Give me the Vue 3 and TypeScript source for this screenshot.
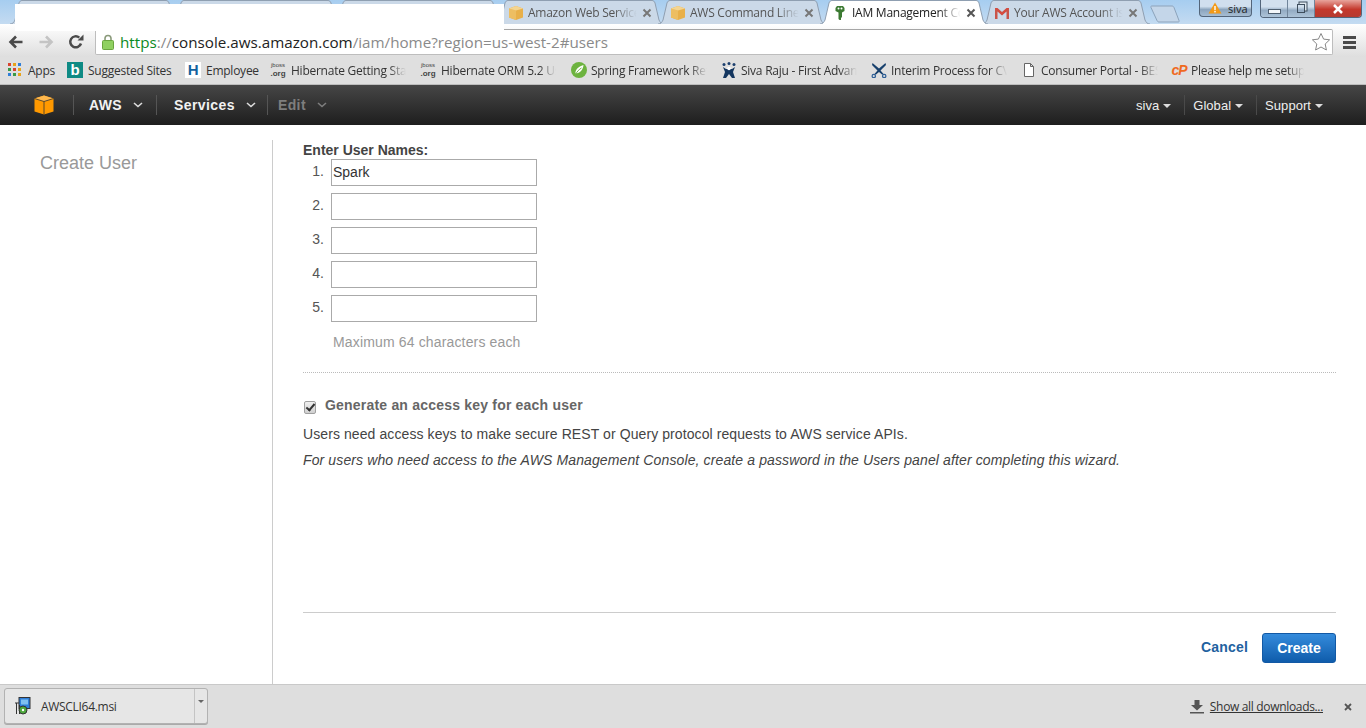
<script setup lang="ts">
interface Tab { title: string; icon: string; active?: boolean }
interface Bookmark { label: string; icon: string; width: number; gap: number; fade?: boolean }
interface NavItem { label: string; dim?: boolean }

const tabs: Tab[] = [
  { title: '', icon: '' },
  { title: '', icon: '' },
  { title: '', icon: '' },
  { title: 'Amazon Web Services', icon: 'cube' },
  { title: 'AWS Command Line Interface', icon: 'cube' },
  { title: 'IAM Management Console', icon: 'key', active: true },
  { title: 'Your AWS Account is ready', icon: 'gmail' }
]

const bookmarks: Bookmark[] = [
  { label: 'Apps', icon: 'apps', width: 28, gap: 11 },
  { label: 'Suggested Sites', icon: 'bing', width: 85, gap: 12 },
  { label: 'Employee', icon: 'h', width: 53, gap: 11 },
  { label: 'Hibernate Getting Started', icon: 'jboss', width: 115, gap: 14, fade: true },
  { label: 'Hibernate ORM 5.2 User Guide', icon: 'jboss', width: 115, gap: 15, fade: true },
  { label: 'Spring Framework Reference', icon: 'spring', width: 116, gap: 14, fade: true },
  { label: 'Siva Raju - First Advantage', icon: 'atl', width: 116, gap: 14, fade: true },
  { label: 'Interim Process for CVS', icon: 'cross', width: 116, gap: 14, fade: true },
  { label: 'Consumer Portal - BESS', icon: 'doc', width: 117, gap: 13, fade: true },
  { label: 'Please help me setup a new', icon: 'cp', width: 113, gap: 0, fade: true }
]

const leftNav: NavItem[] = [
  { label: 'AWS' },
  { label: 'Services' },
  { label: 'Edit', dim: true }
]

const rightNav = ['siva', 'Global', 'Support']
const names = ['Spark', '', '', '', '']
</script>

<template>
  <div class="screen">
    <div class="strip">
      <div v-for="(tab, i) in tabs" :key="i" class="tab" :class="{ active: tab.active }">
        <svg class="tab-shape" viewBox="0 0 168 24" preserveAspectRatio="none">
          <path d="M0 24C3 24 4 22 5 20L9 3C9.500 1.500 10.500 .5 12 .5H156C157.500 .5 158.500 1.500 159 3L163 20C164 22 165 24 168 24" />
        </svg>
        <template v-if="tab.title">
          <svg v-if="tab.icon === 'cube'" class="tab-icon" viewBox="0 0 16 16">
            <path d="M8 1l7 2.500v9L8 15 1 12.500v-9z" fill="#e8b04a" />
            <path d="M8 5.500V15L1 12.500v-9z" fill="#edbe62" />
            <path d="M8 1l7 2.500L8 5.500 1 3.500z" fill="#f4d591" />
          </svg>
          <svg v-else-if="tab.icon === 'key'" class="tab-icon" viewBox="0 0 16 16">
            <path d="M5 1h6l1.500 2v3L10 7.500V12l-1 1v2H7.500L6.500 14V7.500L3.500 6V3z" fill="#3c7a32" />
            <circle cx="6.500" cy="3.500" r="1" fill="#fff" />
            <circle cx="9.500" cy="3.500" r="1" fill="#fff" />
          </svg>
          <svg v-else class="tab-icon" viewBox="0 0 16 16">
            <path d="M1 3h2.500L8 7l4.500-4H15v11h-2.500V6.500L8 10.500 3.500 6.500V14H1z" fill="#c9544a" />
            <path d="M1 3h1.500L8 8l5.500-5H15L8 10z" fill="#d84a3e" />
          </svg>
          <span class="tab-title">{{ tab.title }}</span>
          <svg class="tab-close" viewBox="0 0 10 10">
            <path d="M1.500 1.500l7 7M8.500 1.500l-7 7" />
          </svg>
        </template>
      </div>
      <div class="new-tab">
        <svg viewBox="0 0 32 18"><path d="M2 1h20c1 0 1.500.5 2 1.500l5 13c.5 1 0 1.500-1 1.500H9c-1 0-1.500-.5-2-1.500l-6-13C.5 1.500 1 1 2 1z" /></svg>
      </div>
      <div class="window-ctrls">
        <div class="user-badge">
          <svg viewBox="0 0 14 12" class="warn"><path d="M7 .5l6.500 11H.5z" fill="#f39a16" /><rect x="6.300" y="4" width="1.400" height="4.200" fill="#fff" /><rect x="6.300" y="9" width="1.400" height="1.400" fill="#fff" /></svg>
          <span>siva</span>
        </div>
        <div class="win-btns">
          <div class="win-btn"><span class="min-bar"></span></div>
          <div class="win-btn"><span class="restore"></span></div>
          <div class="win-btn close">
            <svg viewBox="0 0 12 10"><path d="M2 1l8 8M10 1L2 9" /></svg>
          </div>
        </div>
      </div>
    </div>

    <div class="redaction"></div>

    <div class="toolbar">
      <svg class="tool" viewBox="0 0 16 16"><path d="M14.500 8H3M8 2.500L2.500 8 8 13.500" fill="none" stroke="#4a4a4a" stroke-width="2.600" /></svg>
      <svg class="tool fwd" viewBox="0 0 16 16"><path d="M1.500 8H13M8 2.500L13.500 8 8 13.500" fill="none" stroke="#c4c4c4" stroke-width="2.600" /></svg>
      <svg class="tool reload" viewBox="0 0 16 16"><path d="M13 9.500A5.500 5.500 0 1 1 11.300 3.600" fill="none" stroke="#4a4a4a" stroke-width="2.500" /><path d="M9.500 6.500h6v-6z" fill="#4a4a4a" /></svg>
      <div class="omnibox">
        <svg class="lock" viewBox="0 0 12 16"><path d="M3 7V4.500a3 3 0 0 1 6 0V7" fill="none" stroke="#8a9a7a" stroke-width="1.600" /><rect x=".5" y="6.500" width="11" height="9" rx="1" fill="#8fd060" stroke="#6aa53f" /></svg>
        <span class="url"><span class="g">https</span><span class="m">://</span><span class="k">console.aws.amazon.com</span><span class="m">/iam/home?region=us-west-2#users</span></span>
        <svg class="star" viewBox="0 0 20 20"><path d="M10 1.500l2.600 5.600 6 .7-4.400 4.200 1.200 6L10 15l-5.400 3 1.200-6L1.400 7.800l6-.7z" fill="#fff" stroke="#888" /></svg>
      </div>
      <div class="menu"><i></i><i></i><i></i></div>
    </div>

    <div class="bookmarks">
      <div v-for="b in bookmarks" :key="b.label" class="bm" :style="{ marginRight: b.gap + 'px' }">
        <span class="bm-icon" :class="b.icon">
          <svg v-if="b.icon === 'apps'" viewBox="0 0 14 14">
            <rect x="0" y="0" width="3" height="3" fill="#d9442f" /><rect x="5" y="0" width="3" height="3" fill="#e8a31a" /><rect x="10" y="0" width="3" height="3" fill="#2f7fd9" />
            <rect x="0" y="5" width="3" height="3" fill="#3a9a45" /><rect x="5" y="5" width="3" height="3" fill="#d9442f" /><rect x="10" y="5" width="3" height="3" fill="#e8a31a" />
            <rect x="0" y="10" width="3" height="3" fill="#2f7fd9" /><rect x="5" y="10" width="3" height="3" fill="#3a9a45" /><rect x="10" y="10" width="3" height="3" fill="#e8a31a" />
          </svg>
          <template v-else-if="b.icon === 'bing'">b</template>
          <template v-else-if="b.icon === 'h'">H</template>
          <template v-else-if="b.icon === 'jboss'"><small>jboss</small><b>.org</b></template>
          <svg v-else-if="b.icon === 'spring'" viewBox="0 0 16 16">
            <circle cx="8" cy="8" r="8" fill="#6db33f" />
            <path d="M12.500 3C12 8 9 11 4.500 11.500 4 8 7 4.500 12.500 3z" fill="#fff" />
            <path d="M4.500 12.500C6 9.500 8 7.500 10.500 6" stroke="#6db33f" fill="none" />
          </svg>
          <svg v-else-if="b.icon === 'atl'" viewBox="0 0 16 16">
            <circle cx="3" cy="2.500" r="1.500" fill="#1c3f6e" /><circle cx="8" cy="1.500" r="1.500" fill="#1c3f6e" /><circle cx="13" cy="2.500" r="1.500" fill="#1c3f6e" />
            <path d="M2 5l3 2h6l3-2-2 5 2 6h-3l-3-4-3 4H2l2-6z" fill="#14365f" />
            <circle cx="8" cy="6.500" r="1.800" fill="#fff" />
          </svg>
          <svg v-else-if="b.icon === 'cross'" viewBox="0 0 16 16">
            <path d="M1.500 1l6.500 5.500L14.500 1 15 3 9.500 8.500 13 12.500h-2L8 10l-3 2.500H3L6.500 8.500 1 3z" fill="#17406d" />
            <circle cx="2.800" cy="14" r="1.700" fill="none" stroke="#2e5f96" stroke-width="1.200" /><circle cx="13.200" cy="14" r="1.700" fill="none" stroke="#2e5f96" stroke-width="1.200" />
          </svg>
          <svg v-else-if="b.icon === 'doc'" viewBox="0 0 16 16">
            <path d="M3.500 1.500h6l3 3v10h-9z M9.500 1.500v3h3" fill="#fff" stroke="#666" />
          </svg>
          <template v-else-if="b.icon === 'cp'">cP</template>
        </span>
        <span class="bm-label" :class="{ fade: b.fade }" :style="{ width: b.width + 'px' }">{{ b.label }}</span>
      </div>
    </div>

    <nav class="topnav">
      <svg class="aws-cube" viewBox="0 0 20 20">
        <path d="M10 .5l9.500 3v13L10 19.500.5 16.500v-13z" fill="#f90" />
        <path d="M10 .5l9.500 3L10 6.500.5 3.500z" fill="#ffb84d" />
        <path d="M10 6.500v13" stroke="#333" stroke-width=".8" />
        <path d="M.5 3.500L10 6.500l9.500-3" stroke="#333" stroke-width=".8" fill="none" />
      </svg>
      <div v-for="item in leftNav" :key="item.label" class="nav-left" :class="{ dim: item.dim }">
        <span>{{ item.label }}</span>
        <svg class="chev" viewBox="0 0 10 6"><path d="M1 1l4 3.500L9 1" /></svg>
      </div>
      <div class="nav-right">
        <div v-for="r in rightNav" :key="r" class="nav-r-item">
          <span>{{ r }}</span>
          <i class="caret"></i>
        </div>
      </div>
    </nav>

    <div class="page">
      <aside class="side">
        <h1>Create User</h1>
      </aside>
      <main class="form">
        <div class="label">Enter User Names:</div>
        <div class="rows">
          <div v-for="(n, i) in names" :key="i" class="row">
            <span class="num">{{ i + 1 }}.</span>
            <input class="name" type="text" :value="n" />
          </div>
        </div>
        <div class="hint">Maximum 64 characters each</div>
        <div class="dotted"></div>
        <label class="check-row">
          <input type="checkbox" checked />
          <span>Generate an access key for each user</span>
        </label>
        <p class="para">Users need access keys to make secure REST or Query protocol requests to AWS service APIs.</p>
        <p class="para note">For users who need access to the AWS Management Console, create a password in the Users panel after completing this wizard.</p>
        <footer class="actions">
          <span class="cancel">Cancel</span>
          <button class="create" type="button">Create</button>
        </footer>
      </main>
    </div>

    <div class="downloads">
      <div class="dl-item">
        <svg class="msi" viewBox="0 0 18 18">
          <rect x="5" y="0.500" width="11" height="11" fill="#2f7fd9" stroke="#333" />
          <rect x="7" y="2.500" width="7" height="5" fill="#7fc0f0" />
          <path d="M1 6h4M2.500 6v11M5.500 8v9" stroke="#333" fill="none" />
          <circle cx="9" cy="13" r="4" fill="#4ca83c" stroke="#333" />
          <circle cx="9" cy="13" r="1.200" fill="#fff" />
        </svg>
        <span class="dl-name">AWSCLI64.msi</span>
        <span class="dl-arrow"><i></i></span>
      </div>
      <div class="dl-right">
        <svg class="dl-icon" viewBox="0 0 14 14">
          <path d="M4.500 0h5v5H13L7 10.500 1 5h3.500z" fill="#555" />
          <rect x="0" y="12" width="14" height="1.500" fill="#555" />
        </svg>
        <span class="dl-all">Show all downloads...</span>
        <svg class="dl-close" viewBox="0 0 8 8"><path d="M1 1l6 6M7 1L1 7" /></svg>
      </div>
    </div>
  </div>
</template>

<style>
html, body { margin: 0; padding: 0; overflow: hidden; background: #fff; }
</style>

<style scoped>
.screen {
  position: relative;
  width: 1366px;
  height: 728px;
  display: flex;
  flex-direction: column;
  overflow: hidden;
  font-family: "Liberation Sans", Arial, sans-serif;
}

/* tab strip */
.strip {
  position: relative;
  height: 24px;
  flex: none;
  display: flex;
  padding-left: 10px;
  background: linear-gradient(#a6cdf0, #c4dbf1);
}
.tab {
  position: relative;
  flex: none;
  width: 168px;
  margin-right: -6px;
  height: 24px;
  display: flex;
  align-items: center;
  padding: 2px 12px 0 12px;
  box-sizing: border-box;
  font: 12px/22px "Open Sans", sans-serif;
  letter-spacing: -.25px;
  color: #555;
}
.tab-shape { position: absolute; inset: 0; width: 100%; height: 100%; }
.tab-shape path { fill: #cbd9e8; stroke: #8f9fb1; stroke-width: 1; vector-effect: non-scaling-stroke; }
.tab.active { z-index: 2; color: #222; }
.tab.active .tab-shape path { fill: #fff; }
.tab-icon { position: relative; width: 16px; height: 16px; flex: none; }
.tab-title {
  position: relative;
  margin-left: 4px;
  flex: 1;
  min-width: 0;
  white-space: nowrap;
  overflow: hidden;
  -webkit-mask-image: linear-gradient(90deg, #000 78%, transparent 98%);
  mask-image: linear-gradient(90deg, #000 78%, transparent 98%);
}
.tab-close { position: relative; flex: none; width: 10px; height: 10px; margin-left: 3px; }
.tab-close path { stroke: #777; stroke-width: 2; fill: none; }
.tab.active .tab-close path { stroke: #555; }
.new-tab { position: relative; flex: none; width: 32px; height: 18px; margin: 5px 0 0 6px; }
.new-tab svg { display: block; width: 32px; height: 18px; }
.new-tab path { fill: #c4d6e9; stroke: #8ca3bb; }
.window-ctrls { position: absolute; right: 4px; top: 0; display: flex; gap: 8px; }
.user-badge {
  width: 53px;
  height: 17px;
  box-sizing: border-box;
  display: flex;
  align-items: center;
  gap: 6px;
  padding-left: 8px;
  border: 1px solid #53657a;
  border-top: 0;
  border-radius: 0 0 4px 4px;
  background: linear-gradient(#d0dfee 0 40%, #8ba4bd 60%, #a6bdd3);
  font: 11px "Open Sans", sans-serif;
  color: #222;
}
.warn { width: 14px; height: 12px; }
.win-btns {
  display: flex;
  height: 17px;
  border: 1px solid #53657a;
  border-top: 0;
  border-radius: 0 0 4px 4px;
  overflow: hidden;
}
.win-btn {
  width: 27px;
  display: flex;
  align-items: center;
  justify-content: center;
  background: linear-gradient(#d2e0ee 0 40%, #93abc3 60%, #adc3d8);
  border-right: 1px solid #70859b;
  box-sizing: border-box;
}
.win-btn.close { width: 46px; border-right: 0; background: linear-gradient(#e8a49c, #c4382c 55%, #b53a30); }
.win-btn.close svg { width: 12px; height: 10px; }
.win-btn.close path { stroke: #fff; stroke-width: 2.500; fill: none; }
.min-bar { width: 11px; height: 3px; background: #f3f6f9; border: 1px solid #4e5f70; margin-top: 6px; }
.restore { width: 6px; height: 7px; border: 1.500px solid #3e4e5e; box-shadow: 2px -2px 0 -.500px #dfe8f0, 2px -2px 0 .500px #3e4e5e; }

.redaction { position: absolute; left: 15px; top: 4px; width: 489px; height: 27px; background: #fff; z-index: 3; }

/* toolbar */
.toolbar {
  height: 33px;
  flex: none;
  display: flex;
  align-items: flex-start;
  box-sizing: border-box;
  padding: 5px 0 0 8px;
  background: linear-gradient(#fff, #dedede);
}
.tool { width: 16px; height: 16px; flex: none; margin-top: 5px; }
.fwd { margin-left: 14px; }
.reload { margin-left: 14px; }
.omnibox {
  margin-left: 11px;
  width: 1238px;
  height: 26px;
  box-sizing: border-box;
  border: 1px solid #bdbdbd;
  border-top-color: #a5a5a5;
  border-radius: 2px;
  background: #fff;
  display: flex;
  align-items: center;
  padding-left: 6px;
}
.lock { width: 12px; height: 16px; flex: none; }
.url { margin-left: 6px; font: 15.200px/24px "Open Sans", sans-serif; white-space: nowrap; }
.g { color: #0b8a24; }
.m { color: #8a8a8a; }
.k { color: #222; }
.star { width: 20px; height: 20px; margin-left: auto; margin-right: 1px; }
.menu { margin-left: 10px; margin-top: 7px; width: 13px; display: flex; flex-direction: column; gap: 2px; }
.menu i { display: block; height: 3px; background: #4a4a4a; }

/* bookmarks */
.bookmarks {
  height: 27px;
  flex: none;
  box-sizing: border-box;
  display: flex;
  align-items: center;
  padding: 0 0 1px 8px;
  background: #dfdfdf;
  font: 12px "Open Sans", sans-serif;
  letter-spacing: -.25px;
  color: #333;
}
.bm { display: flex; align-items: center; flex: none; white-space: nowrap; }
.bm-icon {
  width: 16px;
  height: 16px;
  flex: none;
  display: flex;
  align-items: center;
  justify-content: center;
  margin-right: 4px;
}
.bm-icon svg { display: block; width: 16px; height: 16px; }
.bm-icon.apps { width: 14px; margin-right: 6px; }
.bm-icon.bing { background: #0e8a84; color: #fff; font: bold 15px/16px "Liberation Sans", sans-serif; margin-right: 5px; }
.bm-icon.h { background: #fff; color: #14629e; font: bold 15px/16px "Liberation Sans", sans-serif; margin-right: 5px; }
.bm-icon.jboss { flex-direction: column; font-family: "Liberation Sans", sans-serif; color: #444; margin-right: 5px; letter-spacing: 0; }
.bm-icon.jboss small { display: block; font-size: 6px; line-height: 7px; }
.bm-icon.jboss b { display: block; font-size: 8px; line-height: 9px; }
.bm-icon.cp { color: #ef6a1f; font: italic bold 14px/16px "Liberation Sans", sans-serif; letter-spacing: -1px; }
.bm-label { display: block; overflow: hidden; }
.bm-label.fade {
  -webkit-mask-image: linear-gradient(90deg, #000 85%, transparent);
  mask-image: linear-gradient(90deg, #000 85%, transparent);
}

/* top nav */
.topnav {
  height: 41px;
  flex: none;
  box-sizing: border-box;
  border-top: 1px solid #bdbdbd;
  display: flex;
  align-items: center;
  padding-left: 34px;
  background: linear-gradient(#464646, #1e1e1e);
  color: #fff;
  font-size: 14px;
}
.aws-cube { width: 20px; height: 20px; flex: none; margin-right: 19px; }
.nav-left {
  height: 20px;
  display: flex;
  align-items: center;
  font-weight: bold;
  letter-spacing: .4px;
  padding: 0 13px 0 15px;
  border-left: 1px solid #555;
  color: #f2f2f2;
}
.nav-left:nth-of-type(2) { padding: 0 11px 0 17px; }
.nav-left.dim { color: #7e7e7e; padding-left: 10px; }
.chev { width: 10px; height: 6px; margin-left: 11px; }
.chev path { fill: none; stroke: #ddd; stroke-width: 1.600; }
.dim .chev path { stroke: #7e7e7e; }
.nav-right { margin-left: auto; margin-right: 30px; display: flex; font-size: 13px; letter-spacing: .05px; color: #eee; }
.nav-r-item { height: 20px; display: flex; align-items: center; padding: 0 13px 0 8px; border-left: 1px solid #4a4a4a; }
.nav-r-item:first-child { border-left: 0; }
.caret { margin-left: 4px; margin-top: 1px; border: 4px solid transparent; border-top-color: #ddd; border-bottom: 0; }

/* page */
.page { flex: 1; min-height: 0; display: flex; background: #fff; }
.side {
  width: 272px;
  flex: none;
  margin-top: 15px;
  box-sizing: content-box;
  border-right: 1px solid #ccc;
}
.side h1 { margin: 12px 0 0 40px; font-size: 18px; line-height: 22px; font-weight: normal; color: #999; }
.form {
  flex: 1;
  min-width: 0;
  margin: 0 30px;
  padding-top: 16px;
  display: flex;
  flex-direction: column;
  font-size: 14px;
  color: #444;
}
.label { font-weight: bold; line-height: 18px; color: #444; }
.rows { display: flex; flex-direction: column; gap: 7px; }
.row { display: flex; align-items: center; height: 27px; }
.num { width: 21px; text-align: right; margin-right: 7px; color: #555; line-height: 24px; padding-bottom: 3px; }
.name {
  width: 206px;
  height: 27px;
  box-sizing: border-box;
  border: 1px solid #aaa;
  border-radius: 0;
  outline: 0;
  padding: 0 1px 2px;
  margin: 0;
  font: 14px "Liberation Sans", sans-serif;
  color: #333;
  background: #fff;
}
.hint { margin: 11px 0 0 30px; line-height: 18px; color: #999; letter-spacing: .15px; }
.dotted { margin-top: 21px; border-top: 1px dotted #bbb; }
.check-row { display: flex; align-items: center; margin-top: 23px; height: 18px; font-weight: bold; color: #666; letter-spacing: .2px; }
.check-row input {
  appearance: none;
  -webkit-appearance: none;
  position: relative;
  width: 12px;
  height: 13px;
  margin: 5px 9px 0 1px;
  flex: none;
  box-sizing: border-box;
  border: 1px solid #a0a0a0;
  border-radius: 2px;
  background: linear-gradient(#f0f0f0, #d0d0d0);
}
.check-row input::after {
  content: "";
  position: absolute;
  left: 3px;
  top: 0;
  width: 3px;
  height: 7px;
  border: solid #333;
  border-width: 0 2px 2px 0;
  transform: rotate(40deg);
}
.para { margin: 11px 0 0; line-height: 18px; color: #444; letter-spacing: .09px; }
.note { margin-top: 8px; font-style: italic; letter-spacing: .12px; }
.actions {
  margin-top: auto;
  margin-bottom: 21px;
  padding-top: 20px;
  border-top: 1px solid #ccc;
  display: flex;
  align-items: center;
  justify-content: flex-end;
  gap: 14px;
}
.cancel { font-weight: bold; color: #22619f; letter-spacing: .2px; margin-top: -2px; }
.create {
  width: 74px;
  height: 30px;
  padding: 0;
  border: 1px solid #1259a5;
  border-radius: 3px;
  background: linear-gradient(#348bdc, #0f5cab);
  color: #fff;
  font: bold 14px "Liberation Sans", sans-serif;
}

/* downloads */
.downloads {
  height: 44px;
  flex: none;
  box-sizing: border-box;
  border-top: 1px solid #c9c9c9;
  background: #dedede;
  display: flex;
  align-items: center;
  padding-left: 4px;
}
.dl-item {
  width: 204px;
  height: 36px;
  margin-top: -1px;
  box-sizing: border-box;
  border: 1px solid #b2b2b2;
  border-radius: 3px;
  background: #e6e6e6;
  display: flex;
  align-items: center;
  padding-left: 9px;
  box-shadow: 0 1px 0 #aaa;
}
.msi { width: 18px; height: 18px; flex: none; }
.dl-name { margin-left: 9px; font: 12px "Open Sans", sans-serif; letter-spacing: -.3px; color: #333; }
.dl-arrow { margin-left: auto; width: 13px; height: 100%; border-left: 1px solid #c4c4c4; display: flex; justify-content: center; padding-top: 11px; box-sizing: border-box; }
.dl-arrow i { display: block; width: 0; height: 0; border: 3px solid transparent; border-top-color: #666; }
.dl-right { margin-left: auto; display: flex; align-items: center; padding-right: 14px; }
.dl-icon { width: 14px; height: 14px; }
.dl-all { margin-left: 6px; font: 12px "Open Sans", sans-serif; letter-spacing: -.33px; color: #333; text-decoration: underline; white-space: nowrap; }
.dl-close { width: 8px; height: 8px; margin-left: 21px; }
.dl-close path { stroke: #555; stroke-width: 1.800; fill: none; }
</style>
